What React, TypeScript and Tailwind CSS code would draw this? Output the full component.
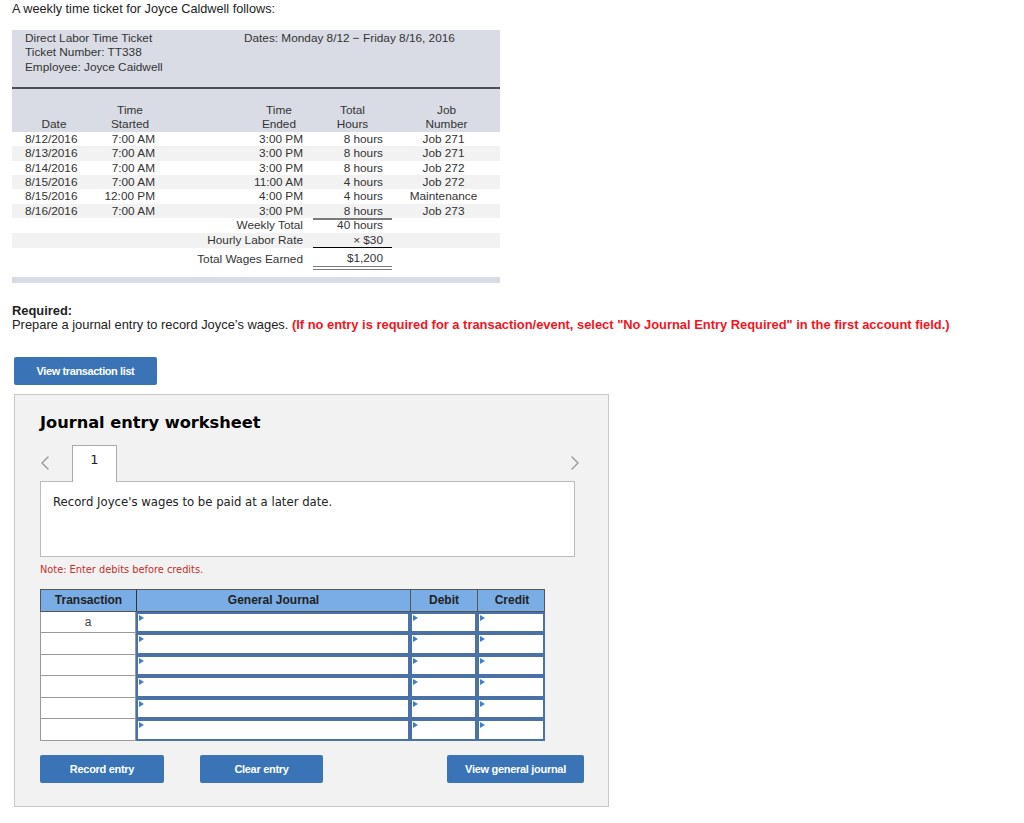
import { ChevronLeft, ChevronRight } from "lucide-react";

type Row = {
  date: string;
  start: string;
  end: string;
  hours: string;
  job: string;
};

const rows: Row[] = [
  { date: "8/12/2016", start: "7:00 AM", end: "3:00 PM", hours: "8 hours", job: "Job 271" },
  { date: "8/13/2016", start: "7:00 AM", end: "3:00 PM", hours: "8 hours", job: "Job 271" },
  { date: "8/14/2016", start: "7:00 AM", end: "3:00 PM", hours: "8 hours", job: "Job 272" },
  { date: "8/15/2016", start: "7:00 AM", end: "11:00 AM", hours: "4 hours", job: "Job 272" },
  { date: "8/15/2016", start: "12:00 PM", end: "4:00 PM", hours: "4 hours", job: "Maintenance" },
  { date: "8/16/2016", start: "7:00 AM", end: "3:00 PM", hours: "8 hours", job: "Job 273" },
];

const cols = "grid grid-cols-[84px_68px_146px_85px_105px]";

function TimeTicket() {
  return (
    <div className="ml-[12px] mt-[13px] w-[488px] text-[11.8px] leading-[14.4px] text-[#333]">
      <div className="flex h-[57px] bg-[#d9dce5] px-[13px] pt-[1px]">
        <div className="w-[219px]">
          <div>Direct Labor Time Ticket</div>
          <div>Ticket Number: TT338</div>
          <div>Employee: Joyce Caidwell</div>
        </div>
        <div>Dates: Monday 8/12 &minus; Friday 8/16, 2016</div>
      </div>
      <div className="h-[2px] bg-[#4d4d4d]" />
      <div className={`${cols} bg-[#d9dce5] pt-[14px]`}>
        <div className="flex items-end justify-center">Date</div>
        <div className="text-center">
          Time
          <br />
          Started
        </div>
        <div className="pr-[14px] text-right">
          <span className="inline-block text-center">
            Time
            <br />
            Ended
          </span>
        </div>
        <div className="text-center">
          Total
          <br />
          Hours
        </div>
        <div className="pr-[2px] text-center">
          Job
          <br />
          Number
        </div>
      </div>
      {rows.map((r, i) => (
        <div key={i} className={`${cols} ${i % 2 === 1 ? "bg-[#f2f2f2]" : "bg-white"}`}>
          <div className="pl-[13px]">{r.date}</div>
          <div className="pr-[9px] text-right">{r.start}</div>
          <div className="pr-[7px] text-right">{r.end}</div>
          <div className={`mx-[3px] pr-[9px] text-right ${i === 5 ? "border-b-2 border-[#7a7a7a] -mb-[2px]" : ""}`}>
            {r.hours}
          </div>
          <div className="pr-[8px] text-center">{r.job}</div>
        </div>
      ))}
      <div className={`${cols} bg-white`}>
        <div className="col-span-3 pr-[7px] text-right">Weekly Total</div>
        <div className="mx-[3px] pr-[9px] text-right">40 hours</div>
        <div />
      </div>
      <div className={`${cols} bg-[#f2f2f2]`}>
        <div className="col-span-3 pr-[7px] text-right">Hourly Labor Rate</div>
        <div className="mx-[3px] border-b border-black pr-[9px] text-right">&times; $30</div>
        <div />
      </div>
      <div className={`${cols} h-[29px] bg-white`}>
        <div className="col-span-3 pt-[4px] pr-[7px] text-right">Total Wages Earned</div>
        <div className="mx-[3px] mb-[7px] border-b-4 border-double border-[#7a7a7a] pt-[3px] pr-[9px] text-right">
          $1,200
        </div>
        <div />
      </div>
      <div className="h-[6px] bg-[#d9dce5]" />
    </div>
  );
}

function InputCell() {
  return (
    <div className="relative h-full border-2 border-[#4a72a6] bg-white">
      <span className="absolute top-[1px] left-[1px] h-0 w-0 border-y-[3px] border-l-[5px] border-y-transparent border-l-[#3f7fd0]" />
    </div>
  );
}

function Worksheet() {
  return (
    <div className="mt-[9px] ml-[14px] h-[413px] w-[595px] border border-[#c8c8c8] bg-[#f2f2f2] pl-[25px] font-['DejaVu_Sans',Verdana,sans-serif] text-[#222]">
      <h2 className="pt-[17px] text-[16.2px] font-bold leading-[22px] text-black">Journal entry worksheet</h2>
      <div className="mt-[11px] flex h-[36px] items-stretch">
        <div className="-ml-[7px] flex w-[39px] items-center text-[#999]">
          <ChevronLeft size={24} strokeWidth={1.4} />
        </div>
        <div className="relative z-10 -mb-px w-[45px] border border-b-0 border-[#aaa] bg-white pt-[4px] text-center text-[13px]">
          1
        </div>
        <div className="flex flex-1 items-center justify-end pr-[21px] text-[#999]">
          <ChevronRight size={24} strokeWidth={1.4} />
        </div>
      </div>
      <div className="h-[76px] w-[535px] border border-[#bbb] bg-white px-[12px] pt-[12px] text-[11.7px]">
        Record Joyce&apos;s wages to be paid at a later date.
      </div>
      <p className="mt-[6px] text-[9.8px] text-[#c3302c]">Note: Enter debits before credits.</p>
      <div className="mt-[11px] w-[505px] font-['Liberation_Sans',Arial,sans-serif] text-[12px]">
        <div className="grid h-[23px] grid-cols-[96px_274px_67px_68px] border border-[#555] bg-[#7aade5] font-bold text-[#222]">
          <div className="flex items-center justify-center border-r border-[#333]">Transaction</div>
          <div className="flex items-center justify-center border-r border-[#555]">General Journal</div>
          <div className="flex items-center justify-center border-r border-[#555]">Debit</div>
          <div className="flex items-center justify-center">Credit</div>
        </div>
        {[0, 1, 2, 3, 4, 5].map((i) => (
          <div key={i} className="grid h-[21.5px] grid-cols-[96px_274px_67px_68px]">
            <div className="flex items-center justify-center border-x border-b border-[#9a9a9a] bg-white text-[#444]">
              {i === 0 ? "a" : ""}
            </div>
            <InputCell />
            <InputCell />
            <InputCell />
          </div>
        ))}
      </div>
      <div className="mt-[14px] flex pr-[24px] font-['Liberation_Sans',Arial,sans-serif] text-[11px] font-bold tracking-[-0.3px] text-white">
        <button className="h-[28px] w-[124px] rounded-[2px] bg-[#3a74b7]">Record entry</button>
        <button className="ml-[36px] h-[28px] w-[123px] rounded-[2px] bg-[#3a74b7]">Clear entry</button>
        <button className="ml-auto h-[28px] w-[137px] rounded-[2px] bg-[#3a74b7]">View general journal</button>
      </div>
    </div>
  );
}

export default function App() {
  return (
    <div className="h-[823px] w-[1024px] bg-white font-['Liberation_Sans',Arial,sans-serif]">
      <p className="pt-[2px] pl-[12px] text-[12.7px] leading-[15px] text-[#222]">
        A weekly time ticket for Joyce Caldwell follows:
      </p>
      <TimeTicket />
      <div className="mt-[21px] px-[12px] text-[12.9px] leading-[14px] text-[#222]">
        <p className="font-bold">Required:</p>
        <p>
          Prepare a journal entry to record Joyce&rsquo;s wages.{" "}
          <span className="font-bold text-[#f5141e]">
            (If no entry is required for a transaction/event, select &quot;No Journal Entry Required&quot; in the first
            account field.)
          </span>
        </p>
      </div>
      <button className="mt-[25px] ml-[14px] h-[28px] w-[143px] rounded-[2px] bg-[#3a74b7] text-[11px] font-bold tracking-[-0.4px] text-white">
        View transaction list
      </button>
      <Worksheet />
    </div>
  );
}
